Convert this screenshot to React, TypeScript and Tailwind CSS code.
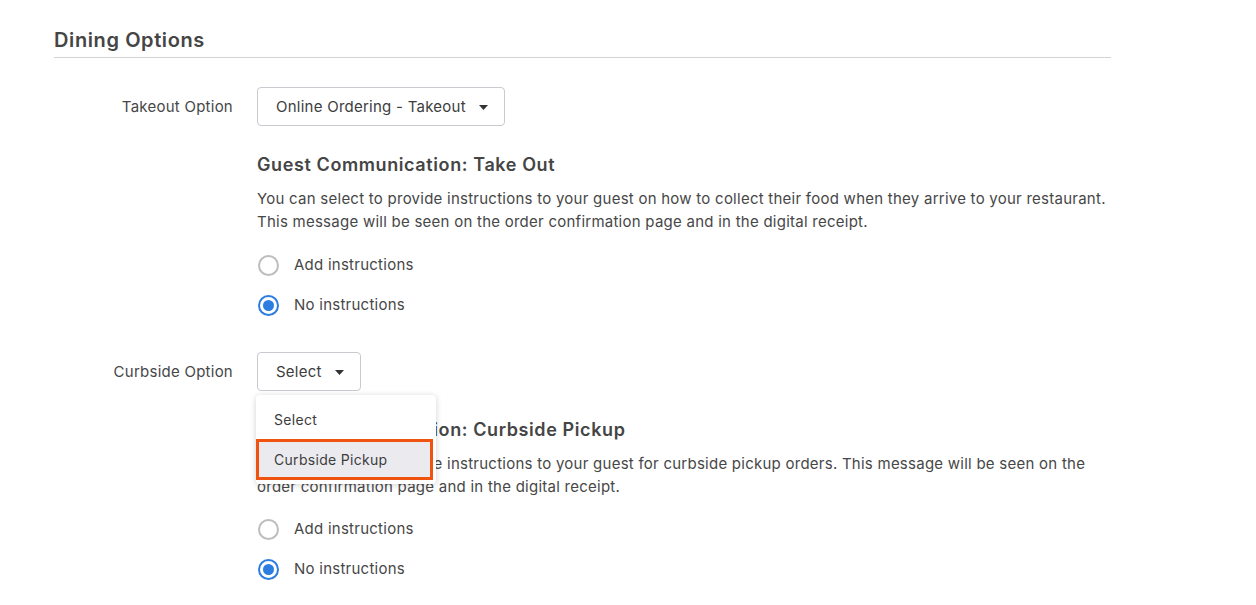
import React from "react";

const FONT = { fontFamily: "Inter, 'Noto Sans', sans-serif" };

function Caret() {
  return (
    <svg width="9" height="5" viewBox="0 0 9 5" className="shrink-0">
      <path d="M0 0 L9 0 L4.5 5 Z" fill="#333" />
    </svg>
  );
}

function Radio({ checked, label }: { checked?: boolean; label: string }) {
  return (
    <div className="flex h-[24px] items-center gap-[15px] pl-[1px]">
      {checked ? (
        <span className="flex h-[21px] w-[21px] items-center justify-center rounded-full border-2 border-[#2b7de0]">
          <span className="h-[11px] w-[11px] rounded-full bg-[#2b7de0]" />
        </span>
      ) : (
        <span className="h-[21px] w-[21px] rounded-full border-2 border-[#bdbdbd]" />
      )}
      <span className="text-[15px] tracking-[0.25px] text-[#474747]">{label}</span>
    </div>
  );
}

function SelectButton({ value, open }: { value: string; open?: boolean }) {
  return (
    <div className="relative">
      <button className="flex h-[39px] items-center gap-[13px] rounded-[4px] border border-[#c9c9cf] bg-white pl-[18px] pr-[16px] pt-[1px] text-[15px] tracking-[0.25px] text-[#3d3d3d]">
        <span>{value}</span>
        <Caret />
      </button>
      {open && (
        <div className="absolute left-[-1px] top-[43px] z-10 w-[180px] rounded-[4px] bg-white py-[4px] shadow-[0_1px_6px_rgba(0,0,0,0.18)]">
          <div className="flex h-[40px] items-center pl-[18px] text-[14px] tracking-[0.3px] text-[#3d3d3d]">Select</div>
          <div className="flex h-[41px] w-[177px] items-center border-[3px] border-[#f0520f] bg-[#ebebef] pl-[15px] text-[14px] tracking-[0.3px] text-[#3d3d3d]">
            Curbside Pickup
          </div>
        </div>
      )}
    </div>
  );
}

function GuestBlock({ title, lines, radioGap }: { title: string; lines: string[]; radioGap: string }) {
  return (
    <div className="ml-[203px]">
      <h3 className="mt-[27px] text-[18px] font-semibold leading-[24px] tracking-[0.6px] text-[#454545]">{title}</h3>
      <p className="mt-[10px] whitespace-nowrap text-[15px] leading-[23px] tracking-[0.25px] text-[#474747]">
        {lines[0]}
        <br />
        {lines[1]}
      </p>
      <div className={"flex flex-col gap-[16px] " + radioGap}>
        <Radio label="Add instructions" />
        <Radio checked label="No instructions" />
      </div>
    </div>
  );
}

function OptionRow({ label, children, className }: { label: string; children: React.ReactNode; className?: string }) {
  return (
    <div className={"flex items-center gap-[24px] " + (className ?? "")}>
      <div className="w-[179px] pt-[2px] text-right text-[15px] tracking-[0.25px] text-[#474747]">{label}</div>
      {children}
    </div>
  );
}

export default function App() {
  return (
    <div className="min-h-[605px] w-[1256px] bg-white" style={FONT}>
      <div className="pl-[54px] pt-[26px]">
        <div className="w-[1057px] border-b border-[#d3d3d6] pb-[3px]">
          <h2 className="text-[20px] font-semibold leading-[28px] tracking-[0.6px] text-[#454545]">Dining Options</h2>
        </div>

        <OptionRow label="Takeout Option" className="mt-[29px]">
          <SelectButton value="Online Ordering - Takeout" />
        </OptionRow>
        <GuestBlock
          radioGap="mt-[20px]"
          title="Guest Communication: Take Out"
          lines={[
            "You can select to provide instructions to your guest on how to collect their food when they arrive to your restaurant.",
            "This message will be seen on the order confirmation page and in the digital receipt.",
          ]}
        />

        <OptionRow label="Curbside Option" className="mt-[35px]">
          <SelectButton value="Select" open />
        </OptionRow>
        <GuestBlock
          radioGap="mt-[19px]"
          title="Guest Communication: Curbside Pickup"
          lines={[
            "You can select to provide instructions to your guest for curbside pickup orders. This message will be seen on the",
            "order confirmation page and in the digital receipt.",
          ]}
        />
      </div>
    </div>
  );
}
